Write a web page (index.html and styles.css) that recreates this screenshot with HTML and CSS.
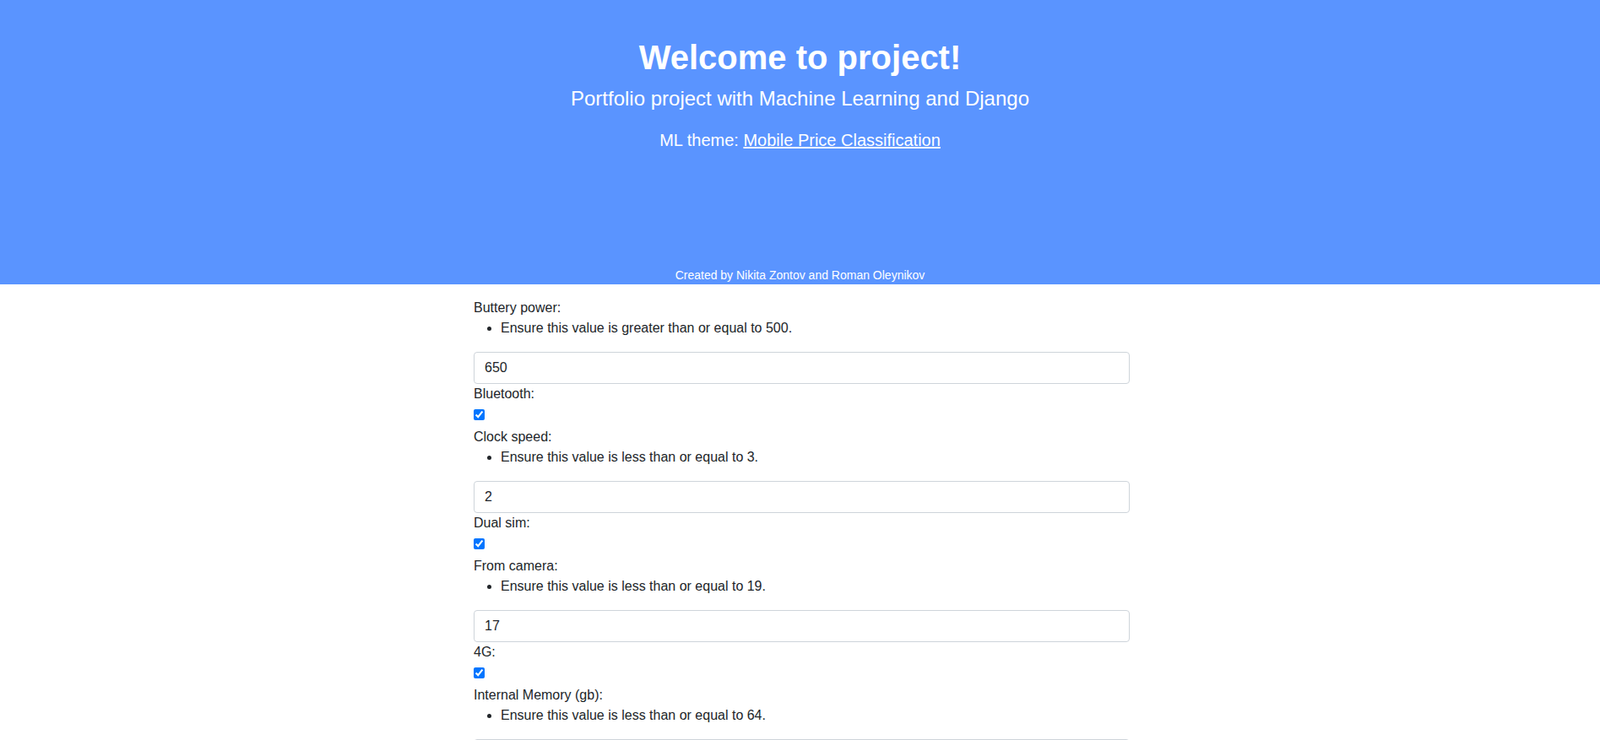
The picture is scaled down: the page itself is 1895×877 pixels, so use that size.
FILE: index.html
```html
<!DOCTYPE html>
<html lang="en">
<head>
<meta charset="utf-8">
<title>Welcome to project!</title>
<link rel="stylesheet" href="styles.css">
</head>
<body>
<header class="hero">
  <h1 class="hero-title">Welcome to project!</h1>
  <p class="hero-sub">Portfolio project with Machine Learning and Django</p>
  <p class="hero-theme">ML theme: <a class="hero-link" href="#">Mobile Price Classification</a></p>
  <p class="hero-credit">Created by Nikita Zontov and Roman Oleynikov</p>
</header>
<main class="form-wrap">
  <form class="predict-form">
    <div class="field">
      <label class="field-label" for="battery">Buttery power:</label>
      <ul class="errors"><li>Ensure this value is greater than or equal to 500.</li></ul>
      <input class="text-input" id="battery" type="text" value="650">
    </div>
    <div class="field">
      <label class="field-label" for="blue">Bluetooth:</label>
      <div class="check-row"><input class="check" id="blue" type="checkbox" checked></div>
    </div>
    <div class="field">
      <label class="field-label" for="clock">Clock speed:</label>
      <ul class="errors"><li>Ensure this value is less than or equal to 3.</li></ul>
      <input class="text-input" id="clock" type="text" value="2">
    </div>
    <div class="field">
      <label class="field-label" for="dual">Dual sim:</label>
      <div class="check-row"><input class="check" id="dual" type="checkbox" checked></div>
    </div>
    <div class="field">
      <label class="field-label" for="fc">From camera:</label>
      <ul class="errors"><li>Ensure this value is less than or equal to 19.</li></ul>
      <input class="text-input" id="fc" type="text" value="17">
    </div>
    <div class="field">
      <label class="field-label" for="four">4G:</label>
      <div class="check-row"><input class="check" id="four" type="checkbox" checked></div>
    </div>
    <div class="field">
      <label class="field-label" for="mem">Internal Memory (gb):</label>
      <ul class="errors"><li>Ensure this value is less than or equal to 64.</li></ul>
      <input class="text-input" id="mem" type="text" value="70">
    </div>
  </form>
</main>
</body>
</html>
```
FILE: styles.css
```css
html, body {
  margin: 0;
  padding: 0;
}
body {
  font-family: "Liberation Sans", Arial, sans-serif;
  font-size: 16px;
  line-height: 1.5;
  color: #212529;
  background: #ffffff;
}
.hero {
  background: #5a94ff;
  color: #ffffff;
  height: 337px;
  display: flex;
  flex-direction: column;
  align-items: center;
  text-align: center;
}
.hero-title {
  margin: 44px 0 0;
  font-size: 40px;
  font-weight: 700;
  line-height: 1.2;
}
.hero-sub {
  margin: 11px 0 0;
  font-size: 24px;
  line-height: 1.2;
  font-weight: 400;
}
.hero-theme {
  margin: 19px 0 0;
  font-size: 20px;
  line-height: 1.5;
}
.hero-link {
  color: #ffffff;
  text-decoration: underline;
}
.hero-credit {
  margin: auto 0 0;
  font-size: 14px;
  line-height: 21px;
}
.form-wrap {
  width: 777px;
  margin: 16px 0 0 calc(50% - 386.5px);
}
.predict-form {
  margin: 0;
}
.field-label {
  display: block;
}
.errors {
  margin: 0 0 16px;
  padding-left: 32px;
}
.text-input {
  display: block;
  width: 100%;
  box-sizing: border-box;
  height: 38px;
  padding: 6px 12px;
  border: 1px solid #ced4da;
  border-radius: 4px;
  font: inherit;
  color: #212529;
  background: #ffffff;
}
.check-row {
  box-sizing: border-box;
  height: 27px;
  padding-top: 6px;
}
.check {
  display: block;
  margin: 0;
  width: 13px;
  height: 13px;
}
```
